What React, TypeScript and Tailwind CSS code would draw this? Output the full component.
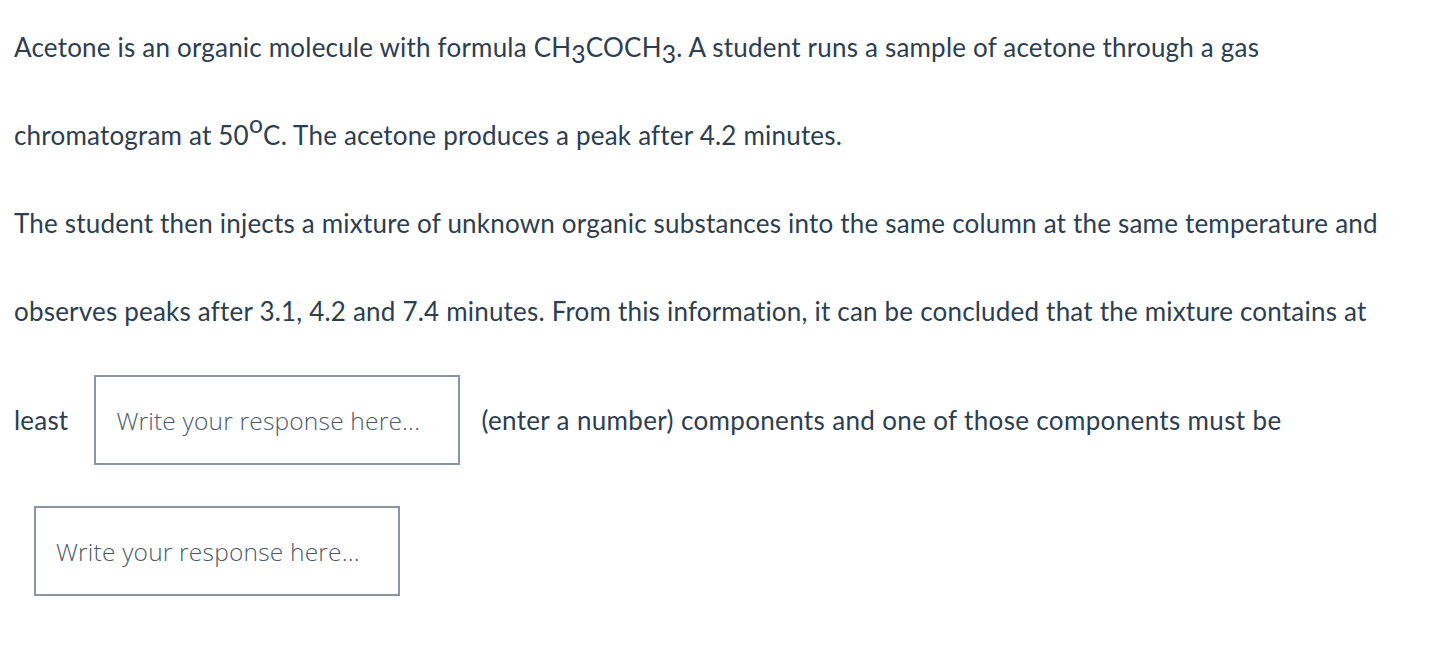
import React from 'react';

const FONT = { fontFamily: 'Lato, "Open Sans", sans-serif' };

function ResponseBox({ className }: { className: string }) {
    return (
        <input
            type="text"
            placeholder="Write your response here..."
            style={{ fontFamily: '"Open Sans", Lato, sans-serif' }}
            className={`${className} h-[90px] w-[366px] shrink-0 border-2 border-[#8996a3] bg-white px-[20px] text-[24.5px] font-light text-[#2c3e50] outline-none placeholder:text-[#4a5a6b]`}
        />
    );
}

export default function App() {
    return (
        <div className="bg-white pt-[3px] pl-[14px] text-[26px] tracking-[0.2px] text-[#2c3e50]" style={FONT}>
            <div className="flex h-[88px] items-center whitespace-nowrap">
                <span>
                    Acetone is an organic molecule with formula CH
                    <sub className="relative -bottom-[0.25em] text-[0.95em]">3</sub>
                    COCH
                    <sub className="relative -bottom-[0.25em] text-[0.95em]">3</sub>. A student runs a sample of
                    acetone through a gas
                </span>
            </div>
            <div className="flex h-[88px] items-center whitespace-nowrap">
                <span>
                    chromatogram at 50<sup className="relative -top-[0.45em] text-[0.95em]">o</sup>C. The acetone
                    produces a peak after 4.2 minutes.
                </span>
            </div>
            <div className="flex h-[88px] items-center whitespace-nowrap">
                <span>
                    The student then injects a mixture of unknown organic substances into the same column at the
                    same temperature and
                </span>
            </div>
            <div className="flex h-[88px] items-center whitespace-nowrap">
                <span>
                    observes peaks after 3.1, 4.2 and 7.4 minutes. From this information, it can be concluded that
                    the mixture contains at
                </span>
            </div>
            <div className="flex items-center py-[20px] whitespace-nowrap">
                <span>least</span>
                <ResponseBox className="mr-[21px] ml-[26px]" />
                <span className="tracking-[0.35px]">
                    (enter a number) components and one of those components must be
                </span>
            </div>
            <div className="flex items-center pt-[21px] pb-[20px]">
                <ResponseBox className="mx-[20px]" />
            </div>
        </div>
    );
}
